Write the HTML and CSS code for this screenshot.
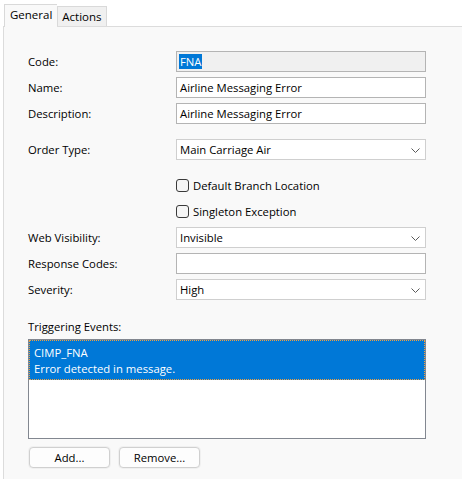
FILE: index.html
```html
<!DOCTYPE html>
<html>
<head>
<meta charset="utf-8">
<link rel="stylesheet" href="styles.css">
</head>
<body>
<div class="tabs">
  <div class="tab active">General</div>
  <div class="tab">Actions</div>
</div>
<div class="panel">
  <div class="row r-code">
    <span class="label">Code:</span>
    <div class="field readonly"><span class="sel">FNA</span></div>
  </div>
  <div class="row r-gap5">
    <span class="label">Name:</span>
    <div class="field">Airline Messaging Error</div>
  </div>
  <div class="row r-gap5">
    <span class="label">Description:</span>
    <div class="field">Airline Messaging Error</div>
  </div>
  <div class="row r-gap15">
    <span class="label">Order Type:</span>
    <div class="field combo">Main Carriage Air<svg class="chev" width="9" height="5" viewBox="0 0 9 5"><polyline points="0.5,0.5 4.5,4.5 8.5,0.5" fill="none" stroke="#5a5a5a" stroke-width="1"/></svg></div>
  </div>
  <div class="row r-check1">
    <span class="label"></span>
    <label class="check"><span class="box"></span>Default Branch Location</label>
  </div>
  <div class="row r-gap5">
    <span class="label"></span>
    <label class="check"><span class="box"></span>Singleton Exception</label>
  </div>
  <div class="row r-gap5">
    <span class="label">Web Visibility:</span>
    <div class="field combo">Invisible<svg class="chev" width="9" height="5" viewBox="0 0 9 5"><polyline points="0.5,0.5 4.5,4.5 8.5,0.5" fill="none" stroke="#5a5a5a" stroke-width="1"/></svg></div>
  </div>
  <div class="row r-gap5">
    <span class="label">Response Codes:</span>
    <div class="field"></div>
  </div>
  <div class="row r-gap5">
    <span class="label">Severity:</span>
    <div class="field combo">High<svg class="chev" width="9" height="5" viewBox="0 0 9 5"><polyline points="0.5,0.5 4.5,4.5 8.5,0.5" fill="none" stroke="#5a5a5a" stroke-width="1"/></svg></div>
  </div>
  <div class="trig-label">Triggering Events:</div>
  <div class="listbox">
    <div class="item selected">
      <div>CIMP_FNA</div>
      <div>Error detected in message.</div>
    </div>
  </div>
  <div class="buttons">
    <button class="btn">Add...</button>
    <button class="btn">Remove...</button>
  </div>
</div>
</body>
</html>
```
FILE: styles.css
```css
html, body {
  margin: 0;
  padding: 0;
  background: #ffffff;
  font-family: "Open Sans", "Noto Sans", sans-serif;
  font-size: 11.3px;
  color: #000;
  height: 479px;
  overflow: hidden;
}
.tabs {
  display: flex;
  align-items: flex-end;
  padding-left: 4px;
  height: 26px;
}
.tab {
  box-sizing: border-box;
  height: 20px;
  padding: 0 4px;
  display: flex;
  align-items: center;
  background: #f0f0f0;
  border: 1px solid #d9d9d9;
  border-bottom: none;
  font-size: 11.5px;
}
.tab.active {
  height: 23px;
  margin-bottom: -1px;
  background: #f9f9f9;
  border-right: none;
  padding: 0 5px 3px 5px;
  position: relative;
  z-index: 1;
}
.panel {
  margin-left: 3px;
  border-top: 1px solid #dcdcdc;
  border-left: 1px solid #dcdcdc;
  background: #f9f9f9;
  height: 460px;
  padding-left: 24px;
  box-sizing: border-box;
}
.row {
  display: flex;
  align-items: center;
  height: 21px;
  margin-top: 5px;
}
.r-code { margin-top: 24px; }
.r-gap15 { margin-top: 15px; }
.r-check1 { margin-top: 15px; }
.label {
  width: 148px;
  flex: none;
}
.field {
  box-sizing: border-box;
  width: 250px;
  height: 21px;
  border: 1px solid #b4b4b4;
  background: #ffffff;
  padding: 0 3px;
  display: flex;
  align-items: center;
  white-space: nowrap;
}
.field.readonly {
  background: #f0f0f0;
  padding-left: 2px;
}
.sel {
  background: #0078d7;
  color: #fff;
  padding: 0 1px;
  line-height: 15px;
}
.field.combo {
  border-color: #cfcfcf;
  justify-content: space-between;
}
.chev {
  margin-right: 2px;
  margin-top: 1px;
}
.check {
  display: flex;
  align-items: center;
}
.box {
  box-sizing: border-box;
  width: 13px;
  height: 13px;
  border: 1px solid #3a3a3a;
  border-radius: 3px;
  background: #f5f5f5;
  margin-right: 4px;
}
.trig-label {
  margin-top: 19px;
  height: 16px;
  line-height: 16px;
}
.listbox {
  box-sizing: border-box;
  margin-top: 4px;
  width: 398px;
  height: 100px;
  border: 1px solid #828790;
  background: #fff;
}
.item.selected {
  box-sizing: border-box;
  background: #0078d7;
  color: #fff;
  height: 40px;
  border: 1px dotted #f0a040;
  padding: 4px 4px 0 4px;
  line-height: 16px;
}
.buttons {
  display: flex;
  gap: 8px;
  margin-top: 8px;
}
.btn {
  box-sizing: border-box;
  width: 81px;
  height: 21px;
  font-family: inherit;
  font-size: 11.3px;
  color: #000;
  background: #fdfdfd;
  border: 1px solid #d0d0d0;
  border-radius: 4px;
  box-shadow: 0 0 0 1px #f0f0f0;
  padding: 0;
  margin-left: 1px;
}
```
